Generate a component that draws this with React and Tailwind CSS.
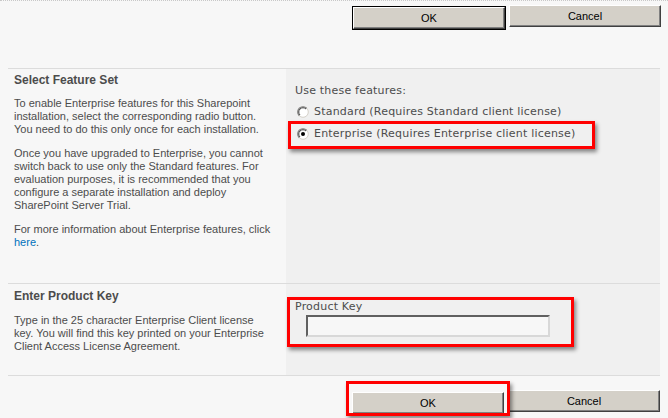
import React from "react";

function Radio({ checked }) {
    return (
        <svg width="12" height="12" viewBox="0 0 12 12" className="shrink-0">
            <circle cx="6" cy="6" r="5.3" fill="#ffffff" stroke="#d4d0c8" strokeWidth="1" />
            <path d="M2.25 9.75 A5.3 5.3 0 0 1 9.75 2.25" fill="none" stroke="#808080" strokeWidth="1.1" />
            <path d="M3 9 A4.2 4.2 0 0 1 9 3" fill="none" stroke="#404040" strokeWidth="1" />
            {checked && <circle cx="6" cy="6" r="2" fill="#000000" />}
        </svg>
    );
}

function WinButton({ label, isDefault }) {
    return (
        <button
            type="button"
            className={
                "w-[152px] h-[22px] bg-[#d4d0c8] text-[11px] text-black border border-t-white border-l-white border-b-[#404040] border-r-[#404040] shadow-[inset_-1px_-1px_0_#808080] " +
                (isDefault ? "outline outline-1 outline-black" : "")
            }
        >
            {label}
        </button>
    );
}

export default function App() {
    const leftText = "text-[11px] leading-[13px] text-[#4c4c4c]";
    const heading = "text-[12px] leading-[13px] font-bold text-[#4c4c4c]";

    return (
        <div
            className="w-[668px] h-[418px] bg-[#f7f7f7] overflow-hidden relative"
            style={{ fontFamily: '"Liberation Sans", Arial, sans-serif' }}
        >
            <div className="border-t border-dotted border-[#c8c8c8]" />
            <div className="flex justify-end gap-[4px] pr-[7px] pt-[4px] h-[67px]">
                <div className="h-[22px]">
                    <WinButton label="OK" isDefault />
                </div>
                <WinButton label="Cancel" />
            </div>

            <div className="mx-[8px] border-t border-[#dcdcdc]">
                <div className="grid grid-cols-[278px_1fr] h-[214px]">
                    <div className="pl-[6px] pt-[5px]">
                        <h3 className={heading}>Select Feature Set</h3>
                        <p className={leftText + " mt-[10px]"}>
                            To enable Enterprise features for this Sharepoint
                            <br />
                            installation, select the corresponding radio button.
                            <br />
                            You need to do this only once for each installation.
                        </p>
                        <p className={leftText + " mt-[11px]"}>
                            Once you have upgraded to Enterprise, you cannot
                            <br />
                            switch back to use only the Standard features. For
                            <br />
                            evaluation purposes, it is recommended that you
                            <br />
                            configure a separate installation and deploy
                            <br />
                            SharePoint Server Trial.
                        </p>
                        <p className={leftText + " mt-[11px]"}>
                            For more information about Enterprise features, click
                            <br />
                            <span className="text-[#0072bc]">here</span>.
                        </p>
                    </div>
                    <div
                        className="bg-[#f0f0f0] pl-[9px] pt-[15px] text-[11px] tracking-[0.2px] text-[#4c4c4c] relative"
                        style={{ fontFamily: '"DejaVu Sans", Verdana, sans-serif' }}
                    >
                        <div className="leading-[13px]">Use these features:</div>
                        <div className="flex items-center gap-[5px] mt-[8px] ml-[2px] h-[14px]">
                            <Radio />
                            <span>Standard (Requires Standard client license)</span>
                        </div>
                        <div className="flex items-center gap-[5px] mt-[8px] ml-[2px] h-[14px]">
                            <Radio checked />
                            <span>Enterprise (Requires Enterprise client license)</span>
                        </div>
                        <div className="absolute left-[2px] top-[52px] w-[307px] h-[28px] border-[3px] border-[#ff0000] shadow-[2px_3px_4px_rgba(0,0,0,0.45)]" />
                    </div>
                </div>

                <div className="border-t border-[#dcdcdc] grid grid-cols-[278px_1fr] h-[92px]">
                    <div className="pl-[6px] pt-[6px]">
                        <h3 className={heading}>Enter Product Key</h3>
                        <p className={leftText + " mt-[11px]"}>
                            Type in the 25 character Enterprise Client license
                            <br />
                            key. You will find this key printed on your Enterprise
                            <br />
                            Client Access License Agreement.
                        </p>
                    </div>
                    <div
                        className="bg-[#f0f0f0] pl-[9px] pt-[16px] text-[#4c4c4c] relative"
                        style={{ fontFamily: '"DejaVu Sans", Verdana, sans-serif' }}
                    >
                        <div className="text-[11px] tracking-[0.2px] leading-[13px]">Product Key</div>
                        <input
                            type="text"
                            className="block ml-[11px] mt-[2px] w-[244px] h-[22px] bg-[#f7f7f7] border-2 border-t-[#606060] border-l-[#606060] border-b-[#d8d8d8] border-r-[#d8d8d8] outline-none"
                        />
                        <div className="absolute left-[1px] top-[13px] w-[287px] h-[50px] border-[3px] border-[#ff0000] shadow-[2px_3px_4px_rgba(0,0,0,0.45)]" />
                    </div>
                </div>

                <div className="border-t border-[#dcdcdc] flex justify-end gap-[4px] pt-[14px]">
                    <div className="relative h-[22px]">
                        <WinButton label="OK" />
                        <div className="absolute -left-[6px] -top-[9px] w-[164px] h-[35px] border-[3px] border-[#ff0000] shadow-[2px_3px_4px_rgba(0,0,0,0.45)]" />
                    </div>
                    <WinButton label="Cancel" />
                </div>
            </div>
        </div>
    );
}
